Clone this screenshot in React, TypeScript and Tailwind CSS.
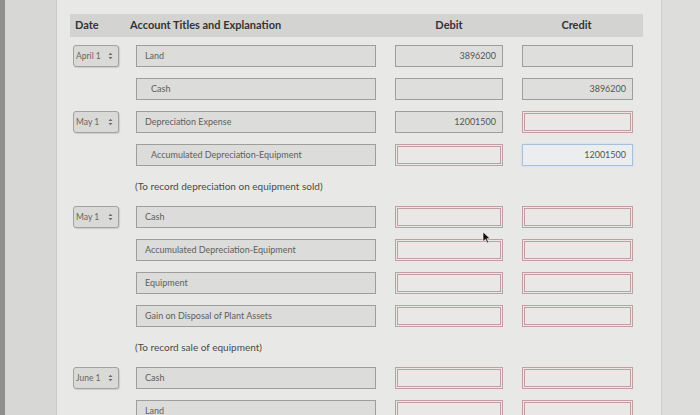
import React from "react";

type Cell = "gray" | "red" | "blue";

interface Row {
  date?: string;
  account: string;
  indent?: boolean;
  debit: Cell;
  debitValue?: string;
  credit: Cell;
  creditValue?: string;
}

type Line = { kind: "row"; row: Row } | { kind: "note"; text: string };

const lines: Line[] = [
  { kind: "row", row: { date: "April 1", account: "Land", debit: "gray", debitValue: "3896200", credit: "gray" } },
  { kind: "row", row: { account: "Cash", indent: true, debit: "gray", credit: "gray", creditValue: "3896200" } },
  { kind: "row", row: { date: "May 1", account: "Depreciation Expense", debit: "gray", debitValue: "12001500", credit: "red" } },
  { kind: "row", row: { account: "Accumulated Depreciation-Equipment", indent: true, debit: "red", credit: "blue", creditValue: "12001500" } },
  { kind: "note", text: "(To record depreciation on equipment sold)" },
  { kind: "row", row: { date: "May 1", account: "Cash", debit: "red", credit: "red" } },
  { kind: "row", row: { account: "Accumulated Depreciation-Equipment", debit: "red", credit: "red" } },
  { kind: "row", row: { account: "Equipment", debit: "red", credit: "red" } },
  { kind: "row", row: { account: "Gain on Disposal of Plant Assets", debit: "red", credit: "red" } },
  { kind: "note", text: "(To record sale of equipment)" },
  { kind: "row", row: { date: "June 1", account: "Cash", debit: "red", credit: "red" } },
  { kind: "row", row: { account: "Land", debit: "red", credit: "red" } },
];

const cellClass: Record<Cell, string> = {
  gray: "border border-[#9e9e9c] bg-[#dededc]",
  red: "border-[3px] border-double border-[#c29ea2] bg-[#e9e8e6]",
  blue: "border-[1.5px] border-[#a6c1de] bg-[#ecedee] shadow-[0_0_2px_#c4d6ea]",
};

function AmountBox({ kind, value, width }: { kind: Cell; value?: string; width: string }) {
  return (
    <div className={`${width} flex h-[22px] items-center justify-end pr-[6px] text-[9px] text-[#555] ${cellClass[kind]}`}>
      {value}
    </div>
  );
}

function DateSelect({ label }: { label?: string }) {
  if (!label) return <div className="w-[46px]" />;
  return (
    <div className="flex h-[22px] w-[46px] items-center rounded-[3px] border border-[#a2a2a0] bg-[#d9d9d7] pl-[2px] shadow-[1px_1px_1px_rgba(0,0,0,0.12)]">
      <span className="flex-1 whitespace-nowrap text-[8.5px] text-[#666]">{label}</span>
      <svg className="mr-[5px]" width="5" height="8" viewBox="0 0 5 8">
        <path d="M0.5 3 L2.5 0.8 L4.5 3 Z M0.5 5 L2.5 7.2 L4.5 5 Z" fill="#6b6b6b" />
      </svg>
    </div>
  );
}

function EntryRow({ row }: { row: Row }) {
  return (
    <div className="flex h-[22px] items-center pl-[16px]">
      <DateSelect label={row.date} />
      <div
        className={`ml-[17px] flex h-[22px] w-[240px] items-center border border-[#9e9e9c] bg-[#dcdcda] text-[9px] text-[#606060] ${
          row.indent ? "pl-[14px]" : "pl-[8px]"
        }`}
      >
        {row.account}
      </div>
      <div className="ml-[19px]">
        <AmountBox kind={row.debit} value={row.debitValue} width="w-[108px]" />
      </div>
      <div className="ml-[19px]">
        <AmountBox kind={row.credit} value={row.creditValue} width="w-[111px]" />
      </div>
    </div>
  );
}

export default function App() {
  return (
    <div className="flex h-[415px] w-[700px] overflow-hidden bg-[#e7e7e5]" style={{ fontFamily: "Lato, 'Open Sans', sans-serif" }}>
      <div className="flex w-[57px] shrink-0 border-r border-[#c9c9c7]">
        <div className="w-[5px] bg-[#8f8f8d]" />
        <div className="flex-1 bg-[#d7d7d5]" />
      </div>

      <div className="relative w-[605px] shrink-0 border-r border-[#cfcfcd] bg-[#e8e8e6]">
        <div className="ml-[13px] mt-[14px] flex h-[23px] w-[573px] items-center bg-[#d3d3d1] text-[11px] font-bold text-[#333]">
          <span className="ml-[5px] w-[55px]">Date</span>
          <span className="w-[266px]">Account Titles and Explanation</span>
          <span className="w-[106px] text-center">Debit</span>
          <span className="ml-[19px] w-[111px] text-center">Credit</span>
        </div>

        <div className="mt-[8px] flex flex-col gap-[11px]">
          {lines.map((line, i) =>
            line.kind === "row" ? (
              <EntryRow key={i} row={line.row} />
            ) : (
              <div key={i} className="flex h-[18px] items-center pl-[78px] text-[10px] text-[#4a4a4a]">
                {line.text}
              </div>
            )
          )}
        </div>

        <svg className="absolute left-[425px] top-[231px]" width="9" height="13" viewBox="0 0 9 13">
          <path d="M1 1 L1 10.5 L3.4 8.3 L5.2 12 L6.6 11.3 L4.9 7.7 L8 7.5 Z" fill="#111" stroke="#fff" strokeWidth="0.6" />
        </svg>
      </div>

      <div className="flex-1 bg-[#dddddb]" />
    </div>
  );
}
